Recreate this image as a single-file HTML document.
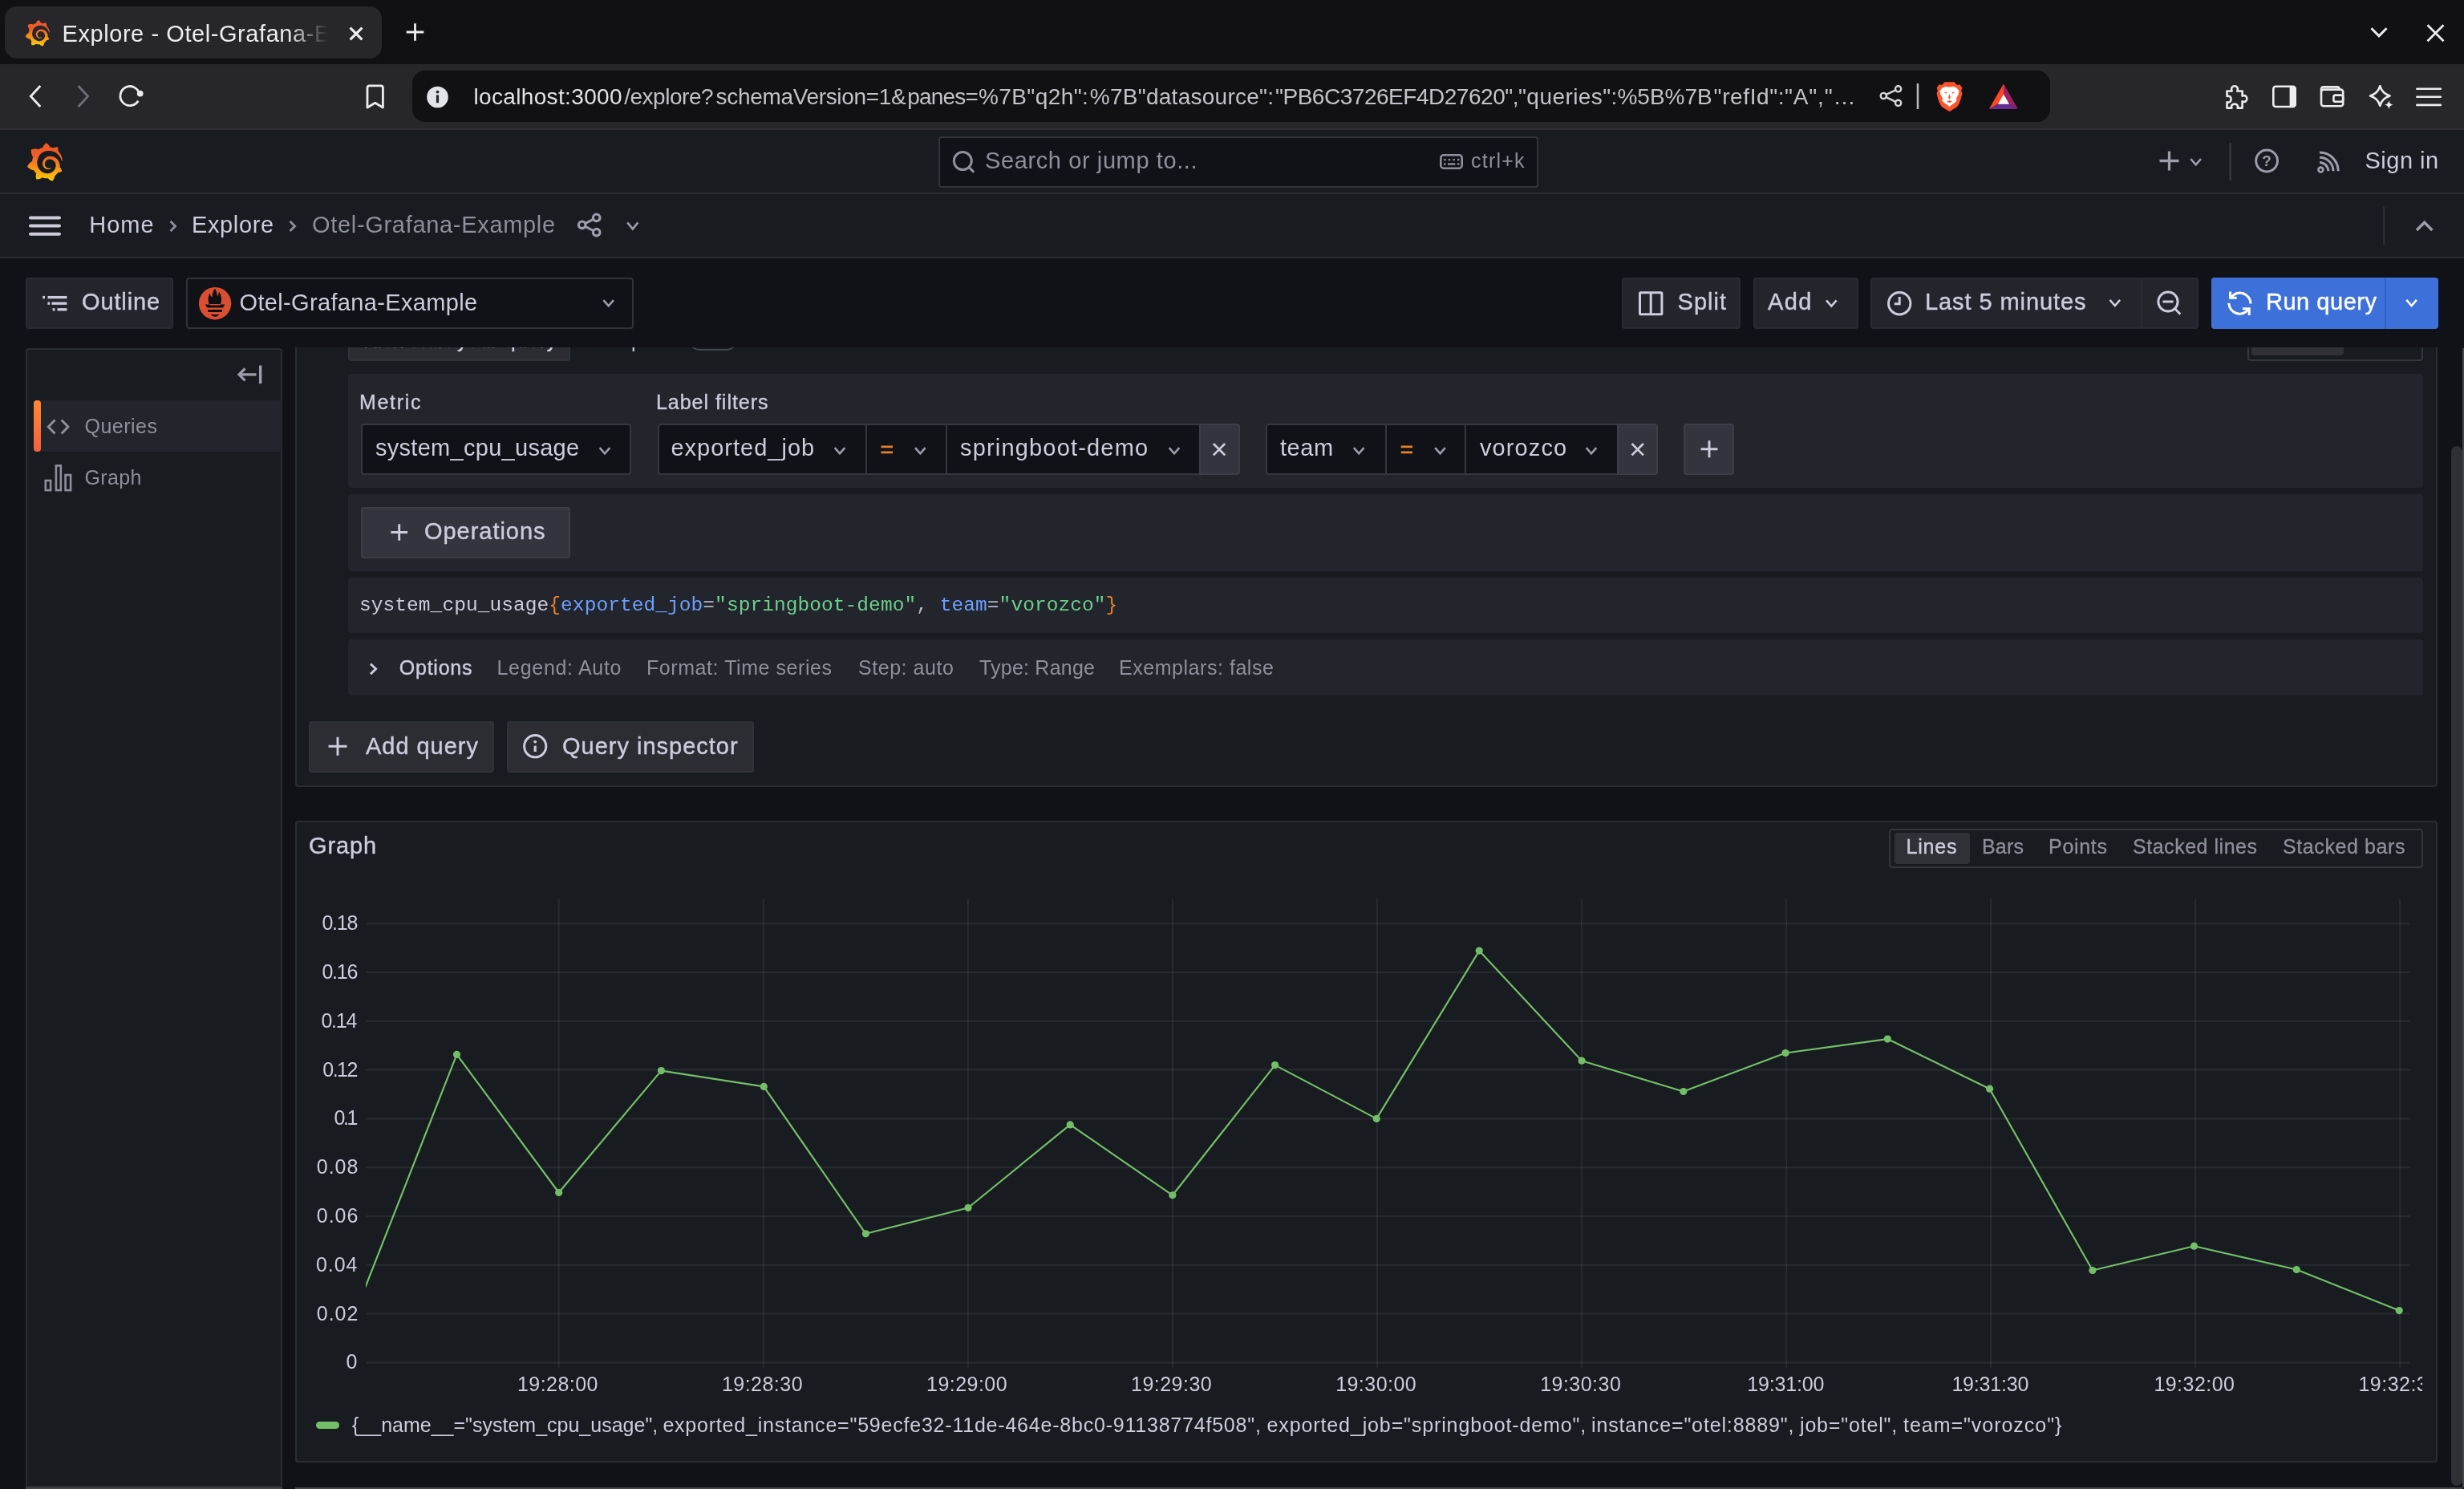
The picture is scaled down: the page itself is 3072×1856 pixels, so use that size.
<!DOCTYPE html>
<html lang="en"><head><meta charset="utf-8"><title>Explore - Otel-Grafana-Example - Grafana</title><style>
html,body{margin:0;padding:0;}
body{width:3072px;height:1856px;overflow:hidden;background:#111217;position:relative;font-family:"Liberation Sans", sans-serif;}
#root{position:absolute;left:0;top:0;width:3072px;height:1856px;overflow:hidden;will-change:transform;}
.a{position:absolute;box-sizing:border-box;}
.t{white-space:pre;line-height:1;font-family:"Liberation Sans", sans-serif;}
.m{font-family:"Liberation Mono", monospace;}
svg{overflow:visible;}
</style></head>
<body>
<div id="root">
<div class="a" style="left:32px;top:434px;width:320px;height:1420px;background:#181b1f;border:2px solid #2a2c32;border-radius:4px 4px 0 0;"></div>
<div class="a" style="left:42px;top:499px;width:309px;height:64px;background:#22252b;border-radius:4px 0 0 4px;"></div>
<div class="a" style="left:42px;top:499px;width:9px;height:64px;background:linear-gradient(180deg,#ff8833 0%,#f55f3e 100%);border-radius:4px;"></div>
<span class="a t" style="left:105.50px;top:518.64px;font-size:25px;color:#8e8f9b;letter-spacing:0.494px;">Queries</span>
<span class="a t" style="left:105.50px;top:583.14px;font-size:25px;color:#8e8f9b;letter-spacing:0.355px;">Graph</span>
<div class="a" style="left:368px;top:380px;width:2671px;height:601px;background:#181b1f;border:2px solid #2a2c32;border-radius:4px;"></div>
<div class="a" style="left:434px;top:401px;width:277px;height:49px;background:#2b2d33;border:2px solid #303239;border-radius:4px;"></div>
<span class="a t" style="left:453.00px;top:411.84px;font-size:25px;color:rgb(204,204,220);letter-spacing:0.657px;-webkit-text-stroke:0.3px rgb(204,204,220);">Kick start your query</span>
<span class="a t" style="left:755.50px;top:411.84px;font-size:25px;color:rgb(204,204,220);letter-spacing:1.152px;">Explain</span>
<div class="a" style="left:857px;top:405px;width:64px;height:32px;background:transparent;border:2px solid #44464e;border-radius:16px;"></div>
<div class="a" style="left:2802px;top:386px;width:219px;height:64px;background:transparent;border:2px solid #34363d;border-radius:4px;"></div>
<div class="a" style="left:2807px;top:392px;width:115px;height:51px;background:#2f3137;border-radius:4px;"></div>
<span class="a t" style="left:2824.00px;top:411.34px;font-size:25px;color:rgb(204,204,220);letter-spacing:0.251px;-webkit-text-stroke:0.3px rgb(204,204,220);">Builder</span>
<span class="a t" style="left:2944.00px;top:411.34px;font-size:25px;color:#8e8f9b;letter-spacing:-0.954px;">Code</span>
<div class="a" style="left:434px;top:466px;width:2587px;height:142px;background:#22252b;border-radius:4px;"></div>
<span class="a t" style="left:448.00px;top:489.14px;font-size:25px;color:rgb(204,204,220);letter-spacing:1.689px;-webkit-text-stroke:0.35px rgb(204,204,220);">Metric</span>
<span class="a t" style="left:818.00px;top:489.14px;font-size:25px;color:rgb(204,204,220);letter-spacing:0.971px;-webkit-text-stroke:0.35px rgb(204,204,220);">Label filters</span>
<div class="a" style="left:450px;top:528px;width:337px;height:64px;background:#111217;border:2px solid #35373f;border-radius:4px;"></div>
<span class="a t" style="left:468.00px;top:543.75px;font-size:29px;color:rgb(204,204,220);letter-spacing:0.284px;">system_cpu_usage</span>
<div class="a" style="left:820px;top:528px;width:261px;height:64px;background:#111217;border:2px solid #35373f;border-radius:4px 0 0 4px;"></div>
<div class="a" style="left:1079px;top:528px;width:102px;height:64px;background:#111217;border:2px solid #35373f;"></div>
<div class="a" style="left:1179px;top:528px;width:318px;height:64px;background:#111217;border:2px solid #35373f;"></div>
<div class="a" style="left:1495px;top:528px;width:51px;height:64px;background:#32353e;border:2px solid #3b3e47;border-radius:0 4px 4px 0;"></div>
<span class="a t" style="left:836.50px;top:543.75px;font-size:29px;color:rgb(204,204,220);letter-spacing:0.995px;">exported_job</span>
<span class="a t" style="left:1197.00px;top:543.75px;font-size:29px;color:rgb(204,204,220);letter-spacing:1.179px;">springboot-demo</span>
<div class="a" style="left:1578px;top:528px;width:151px;height:64px;background:#111217;border:2px solid #35373f;border-radius:4px 0 0 4px;"></div>
<div class="a" style="left:1727px;top:528px;width:101px;height:64px;background:#111217;border:2px solid #35373f;"></div>
<div class="a" style="left:1826px;top:528px;width:192px;height:64px;background:#111217;border:2px solid #35373f;"></div>
<div class="a" style="left:2016px;top:528px;width:51px;height:64px;background:#32353e;border:2px solid #3b3e47;border-radius:0 4px 4px 0;"></div>
<span class="a t" style="left:1596.00px;top:543.75px;font-size:29px;color:rgb(204,204,220);letter-spacing:0.562px;">team</span>
<span class="a t" style="left:1845.00px;top:543.75px;font-size:29px;color:rgb(204,204,220);letter-spacing:1.098px;">vorozco</span>
<div class="a" style="left:2099px;top:528px;width:63px;height:64px;background:#32353e;border:2px solid #3b3e47;border-radius:4px;"></div>
<div class="a" style="left:434px;top:616px;width:2587px;height:96px;background:#22252b;border-radius:4px;"></div>
<div class="a" style="left:450px;top:632px;width:261px;height:64px;background:#32353e;border:2px solid #3b3e47;border-radius:4px;"></div>
<span class="a t" style="left:529.00px;top:647.75px;font-size:29px;color:rgb(204,204,220);letter-spacing:0.960px;-webkit-text-stroke:0.4px rgb(204,204,220);">Operations</span>
<div class="a" style="left:434px;top:720px;width:2587px;height:69px;background:#22252b;border-radius:4px;"></div>
<span class="a t m" style="left:448.00px;top:742.70px;font-size:24.5px;color:rgb(204,204,220);letter-spacing:0.067px;"><span style="color:#ccccdc">system_cpu_usage</span><span style="color:#e5812a">{</span><span style="color:#6e9fff">exported_job</span><span style="color:#b4b6c4">=</span><span style="color:#6ccf8e">"springboot-demo"</span><span style="color:#b4b6c4">, </span><span style="color:#6e9fff">team</span><span style="color:#b4b6c4">=</span><span style="color:#6ccf8e">"vorozco"</span><span style="color:#e5812a">}</span></span>
<div class="a" style="left:434px;top:797px;width:2587px;height:70px;background:#22252b;border-radius:4px;"></div>
<span class="a t" style="left:497.80px;top:819.64px;font-size:25px;color:rgb(204,204,220);letter-spacing:0.757px;-webkit-text-stroke:0.4px rgb(204,204,220);">Options</span>
<span class="a t" style="left:619.50px;top:819.64px;font-size:25px;color:#8e8f9b;letter-spacing:0.696px;">Legend: Auto</span>
<span class="a t" style="left:806.00px;top:819.64px;font-size:25px;color:#8e8f9b;letter-spacing:0.565px;">Format: Time series</span>
<span class="a t" style="left:1070.00px;top:819.64px;font-size:25px;color:#8e8f9b;letter-spacing:0.547px;">Step: auto</span>
<span class="a t" style="left:1221.00px;top:819.64px;font-size:25px;color:#8e8f9b;letter-spacing:0.214px;">Type: Range</span>
<span class="a t" style="left:1395.00px;top:819.64px;font-size:25px;color:#8e8f9b;letter-spacing:0.541px;">Exemplars: false</span>
<div class="a" style="left:385px;top:899px;width:231px;height:64px;background:#2b2d33;border:2px solid #303239;border-radius:4px;"></div>
<span class="a t" style="left:456.00px;top:915.55px;font-size:29px;color:rgb(204,204,220);letter-spacing:0.963px;-webkit-text-stroke:0.4px rgb(204,204,220);">Add query</span>
<div class="a" style="left:632px;top:899px;width:308px;height:64px;background:#2b2d33;border:2px solid #303239;border-radius:4px;"></div>
<span class="a t" style="left:701.00px;top:915.55px;font-size:29px;color:rgb(204,204,220);letter-spacing:0.997px;-webkit-text-stroke:0.4px rgb(204,204,220);">Query inspector</span>
<div class="a" style="left:32px;top:1854.2px;width:320px;height:1.8px;background:#454547;"></div>
<div class="a" style="left:368px;top:1854.2px;width:2702px;height:1.8px;background:#454547;"></div>
<div class="a" style="left:3070px;top:433.5px;width:2px;height:1420.7px;background:#474748;"></div>
<div class="a" style="left:3056px;top:556px;width:13.7px;height:1296px;background:#2f3036;border-radius:7px;"></div>
<div class="a" style="left:368px;top:1023px;width:2671px;height:800px;background:#181b1f;border:2px solid #2a2c32;border-radius:4px;"></div>
<span class="a t" style="left:385.00px;top:1040.25px;font-size:29px;color:rgb(204,204,220);letter-spacing:0.882px;-webkit-text-stroke:0.4px rgb(204,204,220);">Graph</span>
<div class="a" style="left:2355px;top:1033px;width:666px;height:49px;background:transparent;border:2px solid #34363d;border-radius:4px;"></div>
<div class="a" style="left:2362px;top:1038px;width:94px;height:39px;background:#2f3137;border-radius:4px;"></div>
<span class="a t" style="left:2376.50px;top:1043.14px;font-size:25px;color:rgb(204,204,220);letter-spacing:0.809px;-webkit-text-stroke:0.4px rgb(204,204,220);">Lines</span>
<span class="a t" style="left:2471.00px;top:1043.14px;font-size:25px;color:#8e8f9b;letter-spacing:0.199px;-webkit-text-stroke:0.3px #8e8f9b;">Bars</span>
<span class="a t" style="left:2554.00px;top:1043.14px;font-size:25px;color:#8e8f9b;letter-spacing:0.704px;-webkit-text-stroke:0.3px #8e8f9b;">Points</span>
<span class="a t" style="left:2659.00px;top:1043.14px;font-size:25px;color:#8e8f9b;letter-spacing:0.526px;-webkit-text-stroke:0.3px #8e8f9b;">Stacked lines</span>
<span class="a t" style="left:2846.00px;top:1043.14px;font-size:25px;color:#8e8f9b;letter-spacing:0.599px;-webkit-text-stroke:0.3px #8e8f9b;">Stacked bars</span>
<svg class="a" style="left:0;top:0" width="3072" height="1856" viewBox="0 0 3072 1856"><path d="M456.5,1698.4 H3004.5" stroke="rgba(204,204,220,0.085)" stroke-width="2"/><path d="M456.5,1637.6 H3004.5" stroke="rgba(204,204,220,0.085)" stroke-width="2"/><path d="M456.5,1576.8 H3004.5" stroke="rgba(204,204,220,0.085)" stroke-width="2"/><path d="M456.5,1516.0 H3004.5" stroke="rgba(204,204,220,0.085)" stroke-width="2"/><path d="M456.5,1455.2 H3004.5" stroke="rgba(204,204,220,0.085)" stroke-width="2"/><path d="M456.5,1394.4 H3004.5" stroke="rgba(204,204,220,0.085)" stroke-width="2"/><path d="M456.5,1333.6 H3004.5" stroke="rgba(204,204,220,0.085)" stroke-width="2"/><path d="M456.5,1272.8 H3004.5" stroke="rgba(204,204,220,0.085)" stroke-width="2"/><path d="M456.5,1212.0 H3004.5" stroke="rgba(204,204,220,0.085)" stroke-width="2"/><path d="M456.5,1151.2 H3004.5" stroke="rgba(204,204,220,0.085)" stroke-width="2"/><path d="M696.7,1120.5 V1705" stroke="rgba(204,204,220,0.085)" stroke-width="2"/><path d="M951.8,1120.5 V1705" stroke="rgba(204,204,220,0.085)" stroke-width="2"/><path d="M1206.8,1120.5 V1705" stroke="rgba(204,204,220,0.085)" stroke-width="2"/><path d="M1461.9,1120.5 V1705" stroke="rgba(204,204,220,0.085)" stroke-width="2"/><path d="M1716.9,1120.5 V1705" stroke="rgba(204,204,220,0.085)" stroke-width="2"/><path d="M1972.0,1120.5 V1705" stroke="rgba(204,204,220,0.085)" stroke-width="2"/><path d="M2227.1,1120.5 V1705" stroke="rgba(204,204,220,0.085)" stroke-width="2"/><path d="M2482.1,1120.5 V1705" stroke="rgba(204,204,220,0.085)" stroke-width="2"/><path d="M2737.2,1120.5 V1705" stroke="rgba(204,204,220,0.085)" stroke-width="2"/><path d="M2992.2,1120.5 V1705" stroke="rgba(204,204,220,0.085)" stroke-width="2"/><defs><clipPath id="plotclip"><rect x="456" y="1118" width="2552" height="584"/></clipPath></defs><path d="M441.4,1640 L569.5,1314.4 L696.7,1486.5 L824.4,1334.6 L952.3,1354.4 L1079.4,1537.8 L1207.0,1505.5 L1334.2,1401.9 L1461.9,1489.8 L1589.6,1327.6 L1716.2,1394.4 L1844.2,1185.1 L1972.1,1322.2 L2098.8,1360.5 L2226.1,1312.5 L2353.3,1295.1 L2480.6,1357.2 L2608.9,1583.5 L2735.5,1553.2 L2863.2,1582.5 L2991.2,1633.6" fill="none" stroke="#73bf69" stroke-width="2.2" stroke-linejoin="round" clip-path="url(#plotclip)"/><circle cx="569.5" cy="1314.4" r="4.6" fill="#73bf69"/><circle cx="696.7" cy="1486.5" r="4.6" fill="#73bf69"/><circle cx="824.4" cy="1334.6" r="4.6" fill="#73bf69"/><circle cx="952.3" cy="1354.4" r="4.6" fill="#73bf69"/><circle cx="1079.4" cy="1537.8" r="4.6" fill="#73bf69"/><circle cx="1207.0" cy="1505.5" r="4.6" fill="#73bf69"/><circle cx="1334.2" cy="1401.9" r="4.6" fill="#73bf69"/><circle cx="1461.9" cy="1489.8" r="4.6" fill="#73bf69"/><circle cx="1589.6" cy="1327.6" r="4.6" fill="#73bf69"/><circle cx="1716.2" cy="1394.4" r="4.6" fill="#73bf69"/><circle cx="1844.2" cy="1185.1" r="4.6" fill="#73bf69"/><circle cx="1972.1" cy="1322.2" r="4.6" fill="#73bf69"/><circle cx="2098.8" cy="1360.5" r="4.6" fill="#73bf69"/><circle cx="2226.1" cy="1312.5" r="4.6" fill="#73bf69"/><circle cx="2353.3" cy="1295.1" r="4.6" fill="#73bf69"/><circle cx="2480.6" cy="1357.2" r="4.6" fill="#73bf69"/><circle cx="2608.9" cy="1583.5" r="4.6" fill="#73bf69"/><circle cx="2735.5" cy="1553.2" r="4.6" fill="#73bf69"/><circle cx="2863.2" cy="1582.5" r="4.6" fill="#73bf69"/><circle cx="2991.2" cy="1633.6" r="4.6" fill="#73bf69"/></svg>
<span class="a t" style="left:431.50px;top:1685.34px;font-size:25px;color:rgb(204,204,220);">0</span>
<span class="a t" style="left:394.80px;top:1624.54px;font-size:25px;color:rgb(204,204,220);letter-spacing:0.982px;">0.02</span>
<span class="a t" style="left:393.90px;top:1563.74px;font-size:25px;color:rgb(204,204,220);letter-spacing:0.949px;">0.04</span>
<span class="a t" style="left:394.80px;top:1502.94px;font-size:25px;color:rgb(204,204,220);letter-spacing:0.982px;">0.06</span>
<span class="a t" style="left:394.80px;top:1442.14px;font-size:25px;color:rgb(204,204,220);letter-spacing:0.982px;">0.08</span>
<span class="a t" style="left:416.40px;top:1381.34px;font-size:25px;color:rgb(204,204,220);letter-spacing:-2.375px;">0.1</span>
<span class="a t" style="left:402.30px;top:1320.54px;font-size:25px;color:rgb(204,204,220);letter-spacing:-1.518px;">0.12</span>
<span class="a t" style="left:400.40px;top:1259.74px;font-size:25px;color:rgb(204,204,220);letter-spacing:-1.218px;">0.14</span>
<span class="a t" style="left:401.40px;top:1198.94px;font-size:25px;color:rgb(204,204,220);letter-spacing:-1.218px;">0.16</span>
<span class="a t" style="left:401.40px;top:1138.14px;font-size:25px;color:rgb(204,204,220);letter-spacing:-1.218px;">0.18</span>
<span class="a t" style="left:644.90px;top:1713.04px;font-size:25px;color:rgb(204,204,220);letter-spacing:0.470px;">19:28:00</span>
<span class="a t" style="left:899.96px;top:1713.04px;font-size:25px;color:rgb(204,204,220);letter-spacing:0.470px;">19:28:30</span>
<span class="a t" style="left:1155.02px;top:1713.04px;font-size:25px;color:rgb(204,204,220);letter-spacing:0.470px;">19:29:00</span>
<span class="a t" style="left:1410.08px;top:1713.04px;font-size:25px;color:rgb(204,204,220);letter-spacing:0.470px;">19:29:30</span>
<span class="a t" style="left:1665.14px;top:1713.04px;font-size:25px;color:rgb(204,204,220);letter-spacing:0.470px;">19:30:00</span>
<span class="a t" style="left:1920.20px;top:1713.04px;font-size:25px;color:rgb(204,204,220);letter-spacing:0.470px;">19:30:30</span>
<span class="a t" style="left:2178.36px;top:1713.04px;font-size:25px;color:rgb(204,204,220);letter-spacing:-0.187px;">19:31:00</span>
<span class="a t" style="left:2433.42px;top:1713.04px;font-size:25px;color:rgb(204,204,220);letter-spacing:-0.187px;">19:31:30</span>
<span class="a t" style="left:2685.38px;top:1713.04px;font-size:25px;color:rgb(204,204,220);letter-spacing:0.470px;">19:32:00</span>
<div class="a" style="left:2938px;top:1700px;width:81px;height:50px;background:transparent;overflow:hidden;"></div>
<span class="a t" style="left:2940.50px;top:1713.04px;font-size:25px;color:rgb(204,204,220);letter-spacing:0.470px;clip-path:inset(-10px 21.5px -10px -5px);">19:32:30</span>
<div class="a" style="left:393.5px;top:1772px;width:29px;height:9px;background:#73bf69;border-radius:4.5px;"></div>
<span class="a t" style="left:439.00px;top:1763.84px;font-size:25px;color:rgb(204,204,220);">{__name__="system_cpu_usage",</span>
<span class="a t" style="left:826.40px;top:1763.84px;font-size:25px;color:rgb(204,204,220);letter-spacing:0.787px;">exported_instance="59ecfe32-11de-464e-8bc0-91138774f508",</span>
<span class="a t" style="left:1579.60px;top:1763.84px;font-size:25px;color:rgb(204,204,220);letter-spacing:0.873px;">exported_job="springboot-demo",</span>
<span class="a t" style="left:1984.00px;top:1763.84px;font-size:25px;color:rgb(204,204,220);letter-spacing:0.853px;">instance="otel:8889",</span>
<span class="a t" style="left:2244.00px;top:1763.84px;font-size:25px;color:rgb(204,204,220);letter-spacing:0.828px;">job="otel",</span>
<span class="a t" style="left:2373.00px;top:1763.84px;font-size:25px;color:rgb(204,204,220);letter-spacing:0.967px;">team="vorozco"}</span>
<svg class="a" style="left:0;top:0" width="3072" height="1856" viewBox="0 0 3072 1856"><path d="M298,466.8 H319.5 M305.5,459.3 L298,466.8 L305.5,474.3" fill="none" stroke="#9b9dab" stroke-width="3.2" stroke-linecap="butt" stroke-linejoin="miter" /><path d="M324.7,455.5 V478.2" fill="none" stroke="#9b9dab" stroke-width="3.4" stroke-linecap="butt" stroke-linejoin="round" /><path d="M68.5,523.5 L60.3,532 L68.5,540.5 M76.7,523.5 L84.9,532 L76.7,540.5" fill="none" stroke="#8e8f9b" stroke-width="3" stroke-linecap="butt" stroke-linejoin="miter" /><rect x="56.8" y="599" width="6.3" height="12.1" rx="0" fill="none" stroke="#8e8f9b" stroke-width="2.6"/><rect x="69.9" y="580.4" width="5.9" height="30.7" rx="0" fill="none" stroke="#8e8f9b" stroke-width="2.6"/><rect x="81.6" y="592" width="6.5" height="19.1" rx="0" fill="none" stroke="#8e8f9b" stroke-width="2.6"/><path d="M747.7,558.1 L754,565.3000000000001 L760.3,558.1" fill="none" stroke="#9b9dab" stroke-width="2.6" stroke-linecap="butt" stroke-linejoin="miter" /><path d="M1040.7,558.1 L1047,565.3000000000001 L1053.3,558.1" fill="none" stroke="#9b9dab" stroke-width="2.6" stroke-linecap="butt" stroke-linejoin="miter" /><path d="M1098.5,556.8 H1113 M1098.5,563.8 H1113" fill="none" stroke="#e5812a" stroke-width="2.7" stroke-linecap="butt" stroke-linejoin="round" /><path d="M1141.0,558.1 L1147.3,565.3000000000001 L1153.6,558.1" fill="none" stroke="#9b9dab" stroke-width="2.6" stroke-linecap="butt" stroke-linejoin="miter" /><path d="M1457.7,558.1 L1464,565.3000000000001 L1470.3,558.1" fill="none" stroke="#9b9dab" stroke-width="2.6" stroke-linecap="butt" stroke-linejoin="miter" /><path d="M1512.8,553.0 L1527.2,567.4000000000001 M1527.2,553.0 L1512.8,567.4000000000001" fill="none" stroke="rgb(204,204,220)" stroke-width="2.7" stroke-linecap="butt" stroke-linejoin="round" /><path d="M1687.9,558.1 L1694.2,565.3000000000001 L1700.5,558.1" fill="none" stroke="#9b9dab" stroke-width="2.6" stroke-linecap="butt" stroke-linejoin="miter" /><path d="M1746.7,556.8 H1761 M1746.7,563.8 H1761" fill="none" stroke="#e5812a" stroke-width="2.7" stroke-linecap="butt" stroke-linejoin="round" /><path d="M1789.2,558.1 L1795.5,565.3000000000001 L1801.8,558.1" fill="none" stroke="#9b9dab" stroke-width="2.6" stroke-linecap="butt" stroke-linejoin="miter" /><path d="M1977.7,558.1 L1984,565.3000000000001 L1990.3,558.1" fill="none" stroke="#9b9dab" stroke-width="2.6" stroke-linecap="butt" stroke-linejoin="miter" /><path d="M2034.5,553.0 L2048.9,567.4000000000001 M2048.9,553.0 L2034.5,567.4000000000001" fill="none" stroke="rgb(204,204,220)" stroke-width="2.7" stroke-linecap="butt" stroke-linejoin="round" /><path d="M2120.5,559.8 H2141.5 M2131,549.3 V570.3" fill="none" stroke="rgb(204,204,220)" stroke-width="2.9" stroke-linecap="butt" stroke-linejoin="round" /><path d="M487.4,663.5 H508.0 M497.7,653.2 V673.8" fill="none" stroke="rgb(204,204,220)" stroke-width="2.9" stroke-linecap="butt" stroke-linejoin="round" /><path d="M462,827.5 L468.6,833.8 L462,840.1" fill="none" stroke="rgb(204,204,220)" stroke-width="2.9" stroke-linecap="butt" stroke-linejoin="miter" /><path d="M409.5,930.3 H432.5 M421,918.8 V941.8" fill="none" stroke="rgb(204,204,220)" stroke-width="2.9" stroke-linecap="butt" stroke-linejoin="round" /><circle cx="667.2" cy="930.2" r="13.6" fill="none" stroke="rgb(204,204,220)" stroke-width="3"/><circle cx="667.2" cy="924.6" r="1.9" fill="rgb(204,204,220)" stroke="none" stroke-width="0"/><path d="M667.2,929.6 V937" fill="none" stroke="rgb(204,204,220)" stroke-width="3.2" stroke-linecap="butt" stroke-linejoin="round" /></svg>
<div class="a" style="left:0px;top:322px;width:3072px;height:111px;background:#111217;"></div>
<div class="a" style="left:32px;top:346px;width:184px;height:64px;background:#24252c;border:2px solid #2a2b32;border-radius:4px;"></div>
<span class="a t" style="left:102.00px;top:362.25px;font-size:29px;color:rgb(204,204,220);letter-spacing:0.874px;-webkit-text-stroke:0.4px rgb(204,204,220);">Outline</span>
<div class="a" style="left:232px;top:346px;width:558px;height:64px;background:#111217;border:2px solid #303239;border-radius:4px;"></div>
<span class="a t" style="left:298.50px;top:362.75px;font-size:29px;color:rgb(204,204,220);letter-spacing:0.343px;">Otel-Grafana-Example</span>
<div class="a" style="left:2022px;top:346px;width:148px;height:64px;background:#24252c;border:2px solid #2a2b32;border-radius:4px;"></div>
<span class="a t" style="left:2091.50px;top:362.25px;font-size:29px;color:rgb(204,204,220);letter-spacing:1.036px;-webkit-text-stroke:0.4px rgb(204,204,220);">Split</span>
<div class="a" style="left:2186px;top:346px;width:131px;height:64px;background:#24252c;border:2px solid #2a2b32;border-radius:4px;"></div>
<span class="a t" style="left:2204.00px;top:362.25px;font-size:29px;color:rgb(204,204,220);letter-spacing:1.414px;-webkit-text-stroke:0.4px rgb(204,204,220);">Add</span>
<div class="a" style="left:2332px;top:346px;width:339px;height:64px;background:#24252c;border:2px solid #2a2b32;border-radius:4px 0 0 4px;"></div>
<div class="a" style="left:2669px;top:346px;width:72px;height:64px;background:#24252c;border:2px solid #2a2b32;border-radius:0 4px 4px 0;"></div>
<span class="a t" style="left:2400.00px;top:362.25px;font-size:29px;color:rgb(204,204,220);letter-spacing:0.915px;-webkit-text-stroke:0.4px rgb(204,204,220);">Last 5 minutes</span>
<div class="a" style="left:2757px;top:346px;width:216px;height:64px;background:#3d71d9;border-radius:4px 0 0 4px;"></div>
<div class="a" style="left:2974px;top:346px;width:66px;height:64px;background:#3d71d9;border-radius:0 4px 4px 0;"></div>
<div class="a" style="left:2972.5px;top:346px;width:2px;height:64px;background:#3461bd;"></div>
<span class="a t" style="left:2825.00px;top:362.25px;font-size:29px;color:#ffffff;letter-spacing:0.525px;-webkit-text-stroke:0.4px #ffffff;">Run query</span>
<svg class="a" style="left:0;top:0" width="3072" height="1856" viewBox="0 0 3072 1856"><path d="M59.5,370.6 H83.4" fill="none" stroke="rgb(204,204,220)" stroke-width="3.3" stroke-linecap="butt" stroke-linejoin="round" /><path d="M53.2,370.6 H56.0" fill="none" stroke="rgb(204,204,220)" stroke-width="3.3" stroke-linecap="butt" stroke-linejoin="round" /><path d="M64.5,378.2 H83.4" fill="none" stroke="rgb(204,204,220)" stroke-width="3.3" stroke-linecap="butt" stroke-linejoin="round" /><path d="M59.4,378.2 H62.199999999999996" fill="none" stroke="rgb(204,204,220)" stroke-width="3.3" stroke-linecap="butt" stroke-linejoin="round" /><path d="M71.5,385.8 H83.4" fill="none" stroke="rgb(204,204,220)" stroke-width="3.3" stroke-linecap="butt" stroke-linejoin="round" /><path d="M65.6,385.8 H68.4" fill="none" stroke="rgb(204,204,220)" stroke-width="3.3" stroke-linecap="butt" stroke-linejoin="round" /><circle cx="268.1" cy="378.2" r="20.2" fill="#da4e31" stroke="none" stroke-width="0"/><path d="M268,359.8 C270.8,364 270.2,367.3 271.3,369.2 C272.4,368 272.6,365.4 272.9,363.4 C276.6,369 277,374.5 275,379 L260.8,379 C258.8,374.8 259.4,369.5 261.5,365.4 C262.2,368.3 263.2,369.8 264.7,370.4 C264.4,365.8 265.9,362.2 268,359.8 Z" fill="#0f1015" stroke="#0f1015" stroke-width="0" stroke-linecap="round" stroke-linejoin="round" /><path d="M255.8,379.6 L261.5,379.6 L262.5,380.6 L273.8,380.6 L274.8,379.6 L280.4,379.6 L278,383.5 L258.2,383.5 Z" fill="#0f1015" stroke="#0f1015" stroke-width="0" stroke-linecap="round" stroke-linejoin="round" /><rect x="259.3" y="386" width="17.6" height="3" rx="0" fill="#0f1015" stroke="none" stroke-width="0"/><path d="M263,392.1 H273.2 C272.2,394 270.5,394.8 268.1,394.8 C265.7,394.8 264,394 263,392.1 Z" fill="#0f1015" stroke="#0f1015" stroke-width="0" stroke-linecap="round" stroke-linejoin="round" /><path d="M752.4000000000001,374.09999999999997 L758.7,381.3 L765.0,374.09999999999997" fill="none" stroke="#9b9dab" stroke-width="2.6" stroke-linecap="butt" stroke-linejoin="miter" /><rect x="2044.5" y="364.8" width="27.4" height="27" rx="1" fill="none" stroke="rgb(204,204,220)" stroke-width="3"/><path d="M2058.2,364.8 V391.8" fill="none" stroke="rgb(204,204,220)" stroke-width="3" stroke-linecap="butt" stroke-linejoin="round" /><path d="M2277.0,374.4 L2283.3,381.6 L2289.6000000000004,374.4" fill="none" stroke="rgb(204,204,220)" stroke-width="2.6" stroke-linecap="butt" stroke-linejoin="miter" /><circle cx="2368.2" cy="378.2" r="13.7" fill="none" stroke="rgb(204,204,220)" stroke-width="3"/><path d="M2368.2,370 V378.7 H2361.8" fill="none" stroke="rgb(204,204,220)" stroke-width="3" stroke-linecap="butt" stroke-linejoin="miter" /><path d="M2630.5,373.79999999999995 L2636.8,381.0 L2643.1000000000004,373.79999999999995" fill="none" stroke="rgb(204,204,220)" stroke-width="2.6" stroke-linecap="butt" stroke-linejoin="miter" /><circle cx="2703" cy="376" r="12.1" fill="none" stroke="rgb(204,204,220)" stroke-width="3"/><path d="M2711.8,385 L2718.3,391.6 M2696.5,376 H2709.6" fill="none" stroke="rgb(204,204,220)" stroke-width="3" stroke-linecap="butt" stroke-linejoin="round" /><path d="M2806,378.6 A13.5,13.5 0 0 0 2781.6,370.6" fill="none" stroke="#fff" stroke-width="3" stroke-linecap="butt" stroke-linejoin="round" /><path d="M2780.6,363.6 V371.3 H2788.6" fill="none" stroke="#fff" stroke-width="3" stroke-linecap="butt" stroke-linejoin="miter" /><path d="M2778.8,377.8 A13.5,13.5 0 0 0 2803.2,385.6" fill="none" stroke="#fff" stroke-width="3" stroke-linecap="butt" stroke-linejoin="round" /><path d="M2796,384.7 H2804.2 V393" fill="none" stroke="#fff" stroke-width="3" stroke-linecap="butt" stroke-linejoin="miter" /><path d="M3000.2999999999997,373.9 L3006.6,381.1 L3012.9,373.9" fill="none" stroke="#fff" stroke-width="2.6" stroke-linecap="butt" stroke-linejoin="miter" /></svg>
<div class="a" style="left:0px;top:161px;width:3072px;height:80px;background:#181b1f;"></div>
<div class="a" style="left:0px;top:240px;width:3072px;height:2px;background:#2a2c32;"></div>
<div class="a" style="left:0px;top:242px;width:3072px;height:79px;background:#181b1f;"></div>
<div class="a" style="left:0px;top:320px;width:3072px;height:2px;background:#2a2c32;"></div>
<svg class="a" style="left:33.4px;top:177.5px;" width="45.8" height="47.63" viewBox="0 0 351 365"><defs><linearGradient id="lg1" gradientUnits="userSpaceOnUse" x1="175.5" y1="445" x2="175.5" y2="114"><stop offset="0" stop-color="#FFF100"/><stop offset="1" stop-color="#F05A28"/></linearGradient></defs><path fill="url(#lg1)" d="M342,161.2c-0.6-6.1-1.6-13.1-3.6-20.9c-2-7.7-5-16.2-9.4-25c-4.4-8.8-10.1-17.9-17.5-26.8c-2.9-3.5-6.1-6.9-9.5-10.2c5.1-20.3-6.2-37.9-6.2-37.9c-19.5-1.2-31.9,6.1-36.5,9.4c-0.8-0.3-1.5-0.7-2.3-1c-3.3-1.3-6.7-2.6-10.3-3.7c-3.5-1.1-7.1-2.1-10.8-3c-3.7-0.9-7.4-1.6-11.2-2.2c-0.7-0.1-1.3-0.2-2-0.3c-8.500-27.200-32.900-38.600-32.900-38.600c-27.300,17.300-32.400,41.500-32.400,41.500s-0.100,0.500-0.300,1.400c-1.500,0.400-3,0.900-4.500,1.300c-2.100,0.600-4.200,1.400-6.200,2.200c-2.100,0.800-4.100,1.600-6.200,2.500c-4.100,1.800-8.200,3.800-12.200,6c-3.900,2.200-7.700,4.600-11.400,7.100c-0.500-0.200-1-0.400-1-0.400c-37.800-14.400-71.300,2.900-71.300,2.900c-3.100,40.200,15.100,65.500,18.700,70.100c-0.900,2.500-1.700,5-2.500,7.500c-2.800,9.100-4.900,18.400-6.200,28.100c-0.200,1.400-0.400,2.800-0.500,4.200C18.800,192.700,8.500,228,8.500,228c29.100,33.500,63.100,35.600,63.100,35.600c0,0,0.100-0.100,0.100-0.100c4.300,7.700,9.300,15,14.900,21.900c2.400,2.900,4.800,5.600,7.400,8.300c-10.600,30.400,1.500,55.600,1.500,55.600c32.400,1.200,53.700-14.200,58.200-17.700c3.200,1.100,6.500,2.100,9.800,2.900c10,2.600,20.200,4.100,30.400,4.500c2.500,0.100,5.100,0.200,7.600,0.100l1.200,0l0.800,0l1.600,0l1.600-0.100l0,0.100c15.300,21.800,42.100,24.900,42.100,24.900c19.100-20.100,20.200-40.100,20.200-44.400l0,0c0,0,0-0.100,0-0.300c0-0.400,0-0.600,0-0.600l0,0c0-0.300,0-0.600,0-0.900c4-2.800,7.800-5.800,11.400-9.100c7.600-6.900,14.300-14.800,19.900-23.300c0.500-0.800,1-1.600,1.500-2.400c21.600,1.200,36.900-13.400,36.900-13.400c-3.600-22.500-16.400-33.500-19.100-35.600l0,0c0,0-0.100-0.100-0.300-0.200c-0.200-0.100-0.200-0.200-0.200-0.200c0,0,0,0,0,0c-0.100-0.100-0.300-0.200-0.500-0.300c0.100-1.400,0.200-2.700,0.300-4.100c0.200-2.400,0.200-4.900,0.200-7.300l0-1.800l0-0.900l0-0.500c0-0.600,0-0.400,0-0.600l-0.100-1.500l-0.100-2c0-0.700-0.100-1.300-0.200-1.900c-0.100-0.600-0.100-1.300-0.200-1.900l-0.200-1.900l-0.300-1.900c-0.400-2.500-0.800-4.900-1.400-7.400c-2.300-9.700-6.100-18.900-11-27.200c-5-8.300-11.200-15.600-18.300-21.800c-7-6.200-14.900-11.200-23.100-14.900c-8.300-3.700-16.900-6.100-25.500-7.200c-4.300-0.600-8.600-0.800-12.900-0.700l-1.600,0l-0.400,0c-0.100,0-0.600,0-0.500,0l-0.700,0l-1.600,0.100c-0.600,0-1.200,0.100-1.700,0.100c-2.200,0.200-4.400,0.500-6.500,0.900c-8.600,1.600-16.700,4.700-23.800,9c-7.100,4.300-13.300,9.600-18.300,15.600c-5,6-8.900,12.700-11.600,19.600c-2.700,6.900-4.200,14.100-4.600,21c-0.100,1.700-0.100,3.500-0.100,5.200c0,0.400,0,0.900,0,1.300l0.100,1.400c0.100,0.800,0.100,1.700,0.200,2.500c0.300,3.500,1,6.900,1.900,10.100c1.900,6.500,4.900,12.400,8.600,17.400c3.700,5,8.200,9.100,12.900,12.400c4.700,3.200,9.800,5.500,14.800,7c5,1.500,10,2.100,14.700,2.100c0.600,0,1.200,0,1.700,0c0.300,0,0.600,0,0.900,0c0.300,0,0.600,0,0.900-0.100c0.500,0,1-0.100,1.500-0.100c0.100,0,0.300,0,0.400-0.100l0.500-0.100c0.300,0,0.600-0.100,0.900-0.100c0.600-0.100,1.100-0.200,1.700-0.300c0.600-0.100,1.100-0.200,1.600-0.400c1.100-0.200,2.100-0.600,3.100-0.900c2-0.700,4-1.500,5.700-2.400c1.800-0.900,3.400-2,5-3c0.400-0.300,0.900-0.600,1.300-1c1.600-1.300,1.900-3.700,0.600-5.300c-1.100-1.400-3.100-1.800-4.700-0.900c-0.400,0.200-0.800,0.400-1.200,0.600c-1.400,0.700-2.800,1.300-4.300,1.800c-1.500,0.500-3.100,0.900-4.700,1.200c-0.800,0.100-1.600,0.200-2.500,0.300c-0.400,0-0.800,0.100-1.300,0.100c-0.400,0-0.900,0-1.200,0c-0.400,0-0.800,0-1.200,0c-0.500,0-1,0-1.500-0.100c0,0-0.300,0-0.100,0l-0.200,0l-0.300,0c-0.200,0-0.500,0-0.700-0.100c-0.500-0.100-0.900-0.100-1.400-0.200c-3.700-0.500-7.400-1.600-10.900-3.200c-3.600-1.600-7-3.800-10.100-6.600c-3.100-2.800-5.800-6.100-7.900-9.900c-2.100-3.800-3.600-8-4.300-12.400c-0.300-2.200-0.500-4.500-0.400-6.700c0-0.600,0.100-1.200,0.100-1.800c0,0.200,0-0.100,0-0.100l0-0.200l0-0.500c0-0.300,0.100-0.600,0.100-0.900c0.100-1.200,0.300-2.400,0.500-3.600c1.700-9.600,6.500-19,13.900-26.100c1.900-1.800,3.900-3.400,6-4.900c2.100-1.500,4.400-2.800,6.800-3.900c2.400-1.100,4.800-2,7.400-2.700c2.500-0.700,5.100-1.100,7.800-1.400c1.300-0.100,2.600-0.200,4-0.200c0.400,0,0.600,0,0.900,0l1.100,0l0.700,0c0.300,0,0,0,0.100,0l0.300,0l1.100,0.100c2.900,0.200,5.700,0.600,8.500,1.300c5.600,1.200,11.100,3.300,16.200,6.100c10.200,5.700,18.900,14.500,24.200,25.100c2.700,5.300,4.600,11,5.500,16.900c0.200,1.500,0.400,3,0.500,4.500l0.100,1.100l0.100,1.100c0,0.400,0,0.800,0,1.100c0,0.400,0,0.800,0,1.100l0,1l0,1.100c0,0.700-0.100,1.900-0.100,2.600c-0.100,1.600-0.300,3.300-0.500,4.900c-0.200,1.600-0.500,3.200-0.800,4.800c-0.300,1.600-0.700,3.200-1.100,4.700c-0.800,3.100-1.800,6.200-3,9.300c-2.400,6-5.600,11.800-9.400,17.100c-7.700,10.600-18.200,19.200-30.200,24.700c-6,2.700-12.300,4.700-18.800,5.700c-3.200,0.600-6.500,0.900-9.800,1l-0.600,0l-0.500,0l-1.100,0l-1.600,0l-0.800,0c0.400,0-0.100,0-0.100,0l-0.300,0c-1.800,0-3.500-0.100-5.300-0.300c-7-0.500-13.900-1.800-20.700-3.700c-6.700-1.900-13.200-4.600-19.400-7.800c-12.300-6.600-23.400-15.600-32-26.500c-4.300-5.400-8.100-11.300-11.200-17.400c-3.100-6.100-5.600-12.600-7.400-19.100c-1.800-6.600-2.900-13.300-3.400-20.100l-0.100-1.300l0-0.300l0-0.300l0-0.600l0-1.100l0-0.300l0-0.400l0-0.800l0-1.600l0-0.300c0,0,0,0.100,0-0.100l0-0.600c0-0.800,0-1.700,0-2.500c0.100-3.300,0.400-6.800,0.800-10.200c0.400-3.400,1-6.900,1.700-10.300c0.700-3.400,1.500-6.800,2.500-10.200c1.900-6.700,4.300-13.200,7.100-19.300c5.700-12.200,13.100-23.100,22-31.800c2.200-2.200,4.500-4.200,6.900-6.200c2.400-1.900,4.900-3.700,7.500-5.400c2.500-1.700,5.200-3.200,7.900-4.600c1.300-0.700,2.700-1.400,4.100-2c0.700-0.300,1.400-0.600,2.100-0.900c0.700-0.300,1.400-0.600,2.100-0.900c2.800-1.200,5.700-2.200,8.700-3.100c0.700-0.200,1.500-0.400,2.200-0.700c0.700-0.200,1.500-0.400,2.200-0.600c1.500-0.400,3-0.800,4.500-1.100c0.700-0.200,1.500-0.300,2.300-0.500c0.800-0.200,1.500-0.300,2.300-0.500c0.800-0.100,1.500-0.300,2.300-0.400l1.100-0.200l1.200-0.200c0.800-0.100,1.500-0.200,2.300-0.300c0.900-0.100,1.700-0.200,2.600-0.300c0.700-0.100,1.900-0.200,2.600-0.300c0.500-0.100,1.100-0.100,1.600-0.200l1.100-0.100l0.500-0.100l0.600,0c0.900-0.100,1.700-0.100,2.600-0.200l1.300-0.100c0,0,0.500,0,0.100,0l0.300,0l0.600,0c0.700,0,1.500-0.100,2.200-0.100c2.900-0.100,5.900-0.100,8.800,0c5.800,0.200,11.500,0.900,17,1.900c11.100,2.100,21.500,5.600,31,10.300c9.500,4.600,17.900,10.300,25.300,16.500c0.500,0.400,0.900,0.800,1.400,1.200c0.400,0.400,0.900,0.800,1.300,1.200c0.900,0.800,1.700,1.600,2.600,2.400c0.900,0.800,1.700,1.600,2.500,2.400c0.800,0.800,1.600,1.600,2.400,2.500c3.100,3.300,6,6.600,8.600,10c5.200,6.700,9.400,13.500,12.700,19.900c0.200,0.400,0.400,0.800,0.600,1.200c0.200,0.400,0.400,0.800,0.600,1.200c0.400,0.800,0.800,1.600,1.100,2.400c0.400,0.800,0.700,1.500,1.100,2.300c0.300,0.800,0.700,1.500,1,2.300c1.200,3,2.400,5.900,3.300,8.600c1.500,4.400,2.600,8.300,3.500,11.700c0.300,1.400,1.600,2.300,3,2.100c1.500-0.100,2.600-1.300,2.600-2.800C342.600,170.400,342.500,166.100,342,161.200z"/></svg>
<div class="a" style="left:1170px;top:170px;width:748px;height:64px;background:#111217;border:2px solid #31333a;border-radius:4px;"></div>
<span class="a t" style="left:1228.00px;top:186.25px;font-size:29px;color:#8e8f9b;letter-spacing:0.605px;">Search or jump to...</span>
<span class="a t" style="left:1834.00px;top:187.64px;font-size:25px;color:#8e8f9b;letter-spacing:1.215px;">ctrl+k</span>
<span class="a t" style="left:2948.50px;top:186.25px;font-size:29px;color:rgb(204,204,220);letter-spacing:0.493px;">Sign in</span>
<span class="a t" style="left:111.20px;top:266.25px;font-size:29px;color:rgb(204,204,220);letter-spacing:1.024px;">Home</span>
<span class="a t" style="left:239.00px;top:266.25px;font-size:29px;color:rgb(204,204,220);letter-spacing:0.633px;">Explore</span>
<span class="a t" style="left:389.00px;top:266.25px;font-size:29px;color:#8e8f9b;letter-spacing:0.685px;">Otel-Grafana-Example</span>
<svg class="a" style="left:0;top:0" width="3072" height="1856" viewBox="0 0 3072 1856"><circle cx="1200.3" cy="200.6" r="11" fill="none" stroke="#8e8f9b" stroke-width="3"/><path d="M1208.2,208.6 L1214.2,214.6" fill="none" stroke="#8e8f9b" stroke-width="3" stroke-linecap="butt" stroke-linejoin="round" /><rect x="1796.3" y="193.3" width="26.4" height="16.4" rx="3.5" fill="none" stroke="#8e8f9b" stroke-width="2.6"/><rect x="1800.2" y="197.9" width="2.4" height="2.4" rx="0" fill="#8e8f9b" stroke="none" stroke-width="0"/><rect x="1805.8" y="197.9" width="2.4" height="2.4" rx="0" fill="#8e8f9b" stroke="none" stroke-width="0"/><rect x="1811.3999999999999" y="197.9" width="2.4" height="2.4" rx="0" fill="#8e8f9b" stroke="none" stroke-width="0"/><rect x="1817.0" y="197.9" width="2.4" height="2.4" rx="0" fill="#8e8f9b" stroke="none" stroke-width="0"/><rect x="1800" y="203.3" width="2.4" height="2.4" rx="0" fill="#8e8f9b" stroke="none" stroke-width="0"/><rect x="1817" y="203.3" width="2.4" height="2.4" rx="0" fill="#8e8f9b" stroke="none" stroke-width="0"/><rect x="1805" y="203.3" width="9.3" height="2.4" rx="0" fill="#8e8f9b" stroke="none" stroke-width="0"/><path d="M2692.5,200.5 H2716.5 M2704.5,188.5 V212.5" fill="none" stroke="#9b9dab" stroke-width="3.3" stroke-linecap="butt" stroke-linejoin="round" /><path d="M2731.3999999999996,198.20000000000002 L2737.7,205.4 L2744.0,198.20000000000002" fill="none" stroke="#9b9dab" stroke-width="2.6" stroke-linecap="butt" stroke-linejoin="miter" /><rect x="2779.5" y="178" width="2.3" height="47" rx="0" fill="#383a42" stroke="none" stroke-width="0"/><circle cx="2826.1" cy="200.5" r="13.4" fill="none" stroke="#9b9dab" stroke-width="3"/><text x="2826.1" y="207.3" font-family="Liberation Sans, sans-serif" font-size="19" font-weight="700" text-anchor="middle" fill="#9b9dab">?</text><circle cx="2893.4" cy="211.6" r="2.9" fill="none" stroke="#9b9dab" stroke-width="2.7"/><path d="M2892,202.5 A10.8,10.8 0 0 1 2902.8,213.3" fill="none" stroke="#9b9dab" stroke-width="3" stroke-linecap="butt" stroke-linejoin="round" /><path d="M2892,196.2 A17,17 0 0 1 2909,213.3" fill="none" stroke="#9b9dab" stroke-width="3" stroke-linecap="butt" stroke-linejoin="round" /><path d="M2892,190 A23.2,23.2 0 0 1 2915.2,213.3" fill="none" stroke="#9b9dab" stroke-width="3" stroke-linecap="butt" stroke-linejoin="round" /><path d="M38,271.4 H74 M38,281.5 H74 M38,291.7 H74" fill="none" stroke="rgb(204,204,220)" stroke-width="4" stroke-linecap="round" stroke-linejoin="round" /><path d="M212.5,275.8 L218.6,281.9 L212.5,288" fill="none" stroke="#8e8f9b" stroke-width="2.8" stroke-linecap="butt" stroke-linejoin="miter" /><path d="M361.5,275.8 L367.6,281.9 L361.5,288" fill="none" stroke="#8e8f9b" stroke-width="2.8" stroke-linecap="butt" stroke-linejoin="miter" /><circle cx="743.7" cy="271.3" r="4.3" fill="none" stroke="#9b9dab" stroke-width="3.2"/><circle cx="725.7" cy="280.3" r="4.3" fill="none" stroke="#9b9dab" stroke-width="3.2"/><circle cx="743.7" cy="289.6" r="4.3" fill="none" stroke="#9b9dab" stroke-width="3.2"/><path d="M729.8,278.3 L739.7,273.4 M729.8,282.4 L739.7,287.5" fill="none" stroke="#9b9dab" stroke-width="3" stroke-linecap="butt" stroke-linejoin="round" /><path d="M782.1999999999999,277.4 L788.8,285.4 L795.4,277.4" fill="none" stroke="#9b9dab" stroke-width="2.6" stroke-linecap="butt" stroke-linejoin="miter" /><rect x="2971.2" y="258" width="2" height="47" rx="0" fill="#2e3037" stroke="none" stroke-width="0"/><path d="M3013,287 L3022.7,277.2 L3032.4,287" fill="none" stroke="#9b9dab" stroke-width="3.4" stroke-linecap="butt" stroke-linejoin="miter" /></svg>
<div class="a" style="left:0px;top:0px;width:3072px;height:80px;background:#111113;"></div>
<div class="a" style="left:6px;top:8px;width:469.5px;height:65px;background:#26262b;border-radius:15px;"></div>
<div class="a" style="left:0px;top:80px;width:3072px;height:80px;background:#26262b;"></div>
<div class="a" style="left:0px;top:159.5px;width:3072px;height:2px;background:#303036;"></div>
<div class="a" style="left:514px;top:88px;width:2042px;height:64px;background:#111113;border-radius:16px;"></div>
<svg class="a" style="left:31px;top:25px;" width="31.4" height="32.65" viewBox="0 0 351 365"><defs><linearGradient id="lg2" gradientUnits="userSpaceOnUse" x1="175.5" y1="445" x2="175.5" y2="114"><stop offset="0" stop-color="#FFF100"/><stop offset="1" stop-color="#F05A28"/></linearGradient></defs><path fill="url(#lg2)" d="M342,161.2c-0.6-6.1-1.6-13.1-3.6-20.9c-2-7.7-5-16.2-9.4-25c-4.4-8.8-10.1-17.9-17.5-26.8c-2.9-3.5-6.1-6.9-9.5-10.2c5.1-20.3-6.2-37.9-6.2-37.9c-19.5-1.2-31.9,6.1-36.5,9.4c-0.8-0.3-1.5-0.7-2.3-1c-3.3-1.3-6.7-2.6-10.3-3.7c-3.5-1.1-7.1-2.1-10.8-3c-3.7-0.9-7.4-1.6-11.2-2.2c-0.7-0.1-1.3-0.2-2-0.3c-8.500-27.200-32.900-38.600-32.900-38.600c-27.300,17.300-32.400,41.500-32.400,41.500s-0.100,0.500-0.300,1.400c-1.500,0.400-3,0.900-4.500,1.300c-2.100,0.600-4.200,1.400-6.200,2.200c-2.100,0.800-4.100,1.600-6.200,2.500c-4.100,1.800-8.200,3.800-12.200,6c-3.900,2.200-7.700,4.600-11.400,7.100c-0.500-0.200-1-0.400-1-0.400c-37.800-14.400-71.300,2.900-71.300,2.900c-3.100,40.200,15.100,65.500,18.700,70.100c-0.900,2.500-1.700,5-2.500,7.500c-2.800,9.100-4.900,18.400-6.200,28.100c-0.200,1.400-0.400,2.800-0.500,4.200C18.800,192.700,8.500,228,8.500,228c29.100,33.500,63.100,35.600,63.100,35.600c0,0,0.100-0.100,0.100-0.100c4.300,7.700,9.300,15,14.900,21.900c2.400,2.900,4.800,5.600,7.400,8.300c-10.600,30.400,1.500,55.600,1.500,55.600c32.400,1.200,53.700-14.200,58.200-17.700c3.200,1.100,6.500,2.100,9.800,2.900c10,2.600,20.200,4.100,30.400,4.500c2.500,0.100,5.100,0.200,7.600,0.100l1.200,0l0.800,0l1.600,0l1.600-0.100l0,0.100c15.300,21.800,42.100,24.900,42.100,24.900c19.100-20.100,20.200-40.100,20.200-44.400l0,0c0,0,0-0.100,0-0.300c0-0.400,0-0.600,0-0.600l0,0c0-0.300,0-0.600,0-0.900c4-2.800,7.800-5.800,11.400-9.100c7.600-6.900,14.300-14.800,19.900-23.300c0.500-0.800,1-1.600,1.500-2.400c21.600,1.200,36.900-13.400,36.900-13.400c-3.600-22.500-16.400-33.500-19.100-35.600l0,0c0,0-0.100-0.100-0.300-0.200c-0.200-0.100-0.200-0.200-0.200-0.200c0,0,0,0,0,0c-0.100-0.100-0.300-0.200-0.500-0.300c0.100-1.400,0.200-2.700,0.300-4.100c0.200-2.400,0.200-4.900,0.200-7.300l0-1.800l0-0.900l0-0.500c0-0.600,0-0.400,0-0.600l-0.100-1.500l-0.100-2c0-0.700-0.100-1.300-0.200-1.900c-0.100-0.600-0.100-1.300-0.200-1.900l-0.200-1.900l-0.300-1.900c-0.400-2.500-0.800-4.900-1.400-7.400c-2.300-9.700-6.100-18.900-11-27.200c-5-8.300-11.200-15.600-18.300-21.800c-7-6.200-14.900-11.200-23.100-14.900c-8.300-3.700-16.900-6.100-25.500-7.200c-4.300-0.600-8.600-0.800-12.900-0.700l-1.600,0l-0.400,0c-0.100,0-0.600,0-0.500,0l-0.700,0l-1.600,0.100c-0.600,0-1.200,0.100-1.700,0.100c-2.200,0.200-4.400,0.500-6.500,0.900c-8.600,1.600-16.700,4.700-23.800,9c-7.100,4.300-13.300,9.600-18.300,15.600c-5,6-8.900,12.700-11.600,19.600c-2.700,6.900-4.200,14.100-4.600,21c-0.100,1.700-0.100,3.500-0.100,5.200c0,0.400,0,0.900,0,1.300l0.100,1.400c0.100,0.800,0.100,1.700,0.200,2.500c0.300,3.500,1,6.900,1.900,10.100c1.900,6.500,4.900,12.400,8.600,17.400c3.700,5,8.200,9.100,12.900,12.400c4.700,3.200,9.800,5.500,14.800,7c5,1.500,10,2.100,14.700,2.100c0.600,0,1.200,0,1.700,0c0.300,0,0.600,0,0.900,0c0.300,0,0.600,0,0.900-0.100c0.500,0,1-0.100,1.500-0.100c0.100,0,0.300,0,0.400-0.100l0.500-0.100c0.300,0,0.600-0.100,0.900-0.100c0.600-0.100,1.100-0.200,1.700-0.300c0.600-0.100,1.100-0.200,1.600-0.400c1.100-0.200,2.100-0.600,3.100-0.900c2-0.700,4-1.500,5.700-2.400c1.800-0.900,3.400-2,5-3c0.400-0.300,0.900-0.600,1.300-1c1.600-1.300,1.900-3.700,0.600-5.300c-1.100-1.400-3.100-1.800-4.700-0.900c-0.400,0.200-0.800,0.400-1.200,0.600c-1.400,0.700-2.800,1.300-4.300,1.800c-1.500,0.500-3.100,0.900-4.700,1.200c-0.800,0.100-1.600,0.200-2.500,0.300c-0.400,0-0.800,0.100-1.300,0.100c-0.400,0-0.900,0-1.200,0c-0.400,0-0.800,0-1.200,0c-0.500,0-1,0-1.500-0.100c0,0-0.300,0-0.100,0l-0.200,0l-0.300,0c-0.200,0-0.500,0-0.700-0.100c-0.500-0.100-0.900-0.100-1.400-0.200c-3.700-0.500-7.400-1.600-10.900-3.200c-3.600-1.600-7-3.800-10.100-6.600c-3.100-2.800-5.800-6.100-7.900-9.900c-2.100-3.800-3.600-8-4.300-12.400c-0.300-2.200-0.500-4.500-0.400-6.700c0-0.600,0.100-1.200,0.100-1.800c0,0.200,0-0.100,0-0.100l0-0.200l0-0.500c0-0.300,0.100-0.600,0.100-0.900c0.100-1.200,0.300-2.400,0.500-3.600c1.700-9.600,6.500-19,13.900-26.100c1.900-1.800,3.900-3.400,6-4.900c2.100-1.500,4.400-2.800,6.800-3.900c2.400-1.100,4.800-2,7.400-2.700c2.500-0.700,5.100-1.100,7.800-1.400c1.300-0.100,2.600-0.200,4-0.200c0.400,0,0.600,0,0.900,0l1.100,0l0.700,0c0.300,0,0,0,0.100,0l0.300,0l1.100,0.100c2.900,0.200,5.700,0.600,8.500,1.300c5.600,1.200,11.100,3.300,16.200,6.100c10.200,5.700,18.900,14.500,24.200,25.100c2.700,5.300,4.600,11,5.500,16.900c0.200,1.500,0.400,3,0.500,4.500l0.100,1.100l0.100,1.100c0,0.400,0,0.800,0,1.100c0,0.400,0,0.800,0,1.100l0,1l0,1.100c0,0.700-0.100,1.900-0.100,2.600c-0.100,1.600-0.300,3.300-0.500,4.900c-0.200,1.600-0.500,3.200-0.800,4.800c-0.300,1.600-0.700,3.200-1.100,4.700c-0.800,3.100-1.800,6.200-3,9.300c-2.400,6-5.600,11.800-9.400,17.100c-7.700,10.600-18.200,19.200-30.200,24.700c-6,2.700-12.300,4.700-18.800,5.700c-3.200,0.600-6.500,0.900-9.800,1l-0.600,0l-0.500,0l-1.100,0l-1.600,0l-0.800,0c0.400,0-0.100,0-0.100,0l-0.300,0c-1.800,0-3.500-0.100-5.300-0.300c-7-0.500-13.900-1.800-20.700-3.700c-6.700-1.900-13.200-4.600-19.400-7.800c-12.300-6.600-23.400-15.600-32-26.500c-4.300-5.400-8.100-11.300-11.200-17.400c-3.100-6.100-5.600-12.600-7.400-19.100c-1.800-6.600-2.900-13.300-3.400-20.100l-0.100-1.300l0-0.300l0-0.300l0-0.600l0-1.100l0-0.300l0-0.400l0-0.800l0-1.600l0-0.300c0,0,0,0.100,0-0.100l0-0.600c0-0.800,0-1.700,0-2.500c0.100-3.300,0.400-6.800,0.800-10.200c0.400-3.400,1-6.900,1.700-10.300c0.700-3.400,1.500-6.800,2.500-10.200c1.900-6.700,4.300-13.200,7.100-19.300c5.700-12.200,13.100-23.100,22-31.800c2.200-2.200,4.500-4.200,6.900-6.200c2.400-1.900,4.900-3.700,7.500-5.400c2.500-1.700,5.200-3.200,7.900-4.600c1.300-0.700,2.700-1.400,4.100-2c0.700-0.300,1.400-0.600,2.100-0.900c0.700-0.300,1.400-0.600,2.100-0.900c2.800-1.200,5.700-2.200,8.700-3.100c0.700-0.200,1.500-0.400,2.200-0.700c0.700-0.200,1.500-0.400,2.200-0.600c1.500-0.400,3-0.800,4.500-1.100c0.700-0.200,1.500-0.300,2.300-0.500c0.800-0.200,1.500-0.300,2.300-0.500c0.800-0.100,1.500-0.300,2.300-0.400l1.100-0.200l1.200-0.200c0.800-0.100,1.500-0.200,2.300-0.300c0.900-0.100,1.700-0.200,2.600-0.300c0.700-0.100,1.900-0.200,2.600-0.300c0.500-0.100,1.100-0.100,1.600-0.200l1.100-0.100l0.500-0.100l0.600,0c0.900-0.100,1.700-0.100,2.600-0.200l1.300-0.100c0,0,0.500,0,0.100,0l0.300,0l0.600,0c0.700,0,1.500-0.100,2.200-0.100c2.900-0.100,5.900-0.100,8.800,0c5.800,0.200,11.500,0.900,17,1.900c11.100,2.100,21.500,5.600,31,10.300c9.500,4.600,17.900,10.300,25.300,16.500c0.500,0.400,0.900,0.800,1.400,1.200c0.400,0.400,0.900,0.800,1.300,1.200c0.900,0.800,1.700,1.600,2.600,2.400c0.900,0.800,1.700,1.600,2.500,2.400c0.800,0.800,1.600,1.600,2.400,2.500c3.100,3.300,6,6.600,8.600,10c5.200,6.700,9.400,13.500,12.700,19.900c0.200,0.400,0.400,0.800,0.600,1.200c0.200,0.400,0.400,0.800,0.600,1.200c0.400,0.800,0.800,1.600,1.100,2.400c0.400,0.800,0.700,1.500,1.100,2.300c0.300,0.800,0.700,1.500,1,2.300c1.200,3,2.400,5.900,3.300,8.600c1.500,4.400,2.600,8.300,3.500,11.700c0.300,1.400,1.600,2.300,3,2.100c1.500-0.100,2.600-1.300,2.600-2.800C342.600,170.400,342.500,166.100,342,161.200z"/></svg>
<span class="a t" style="left:77.50px;top:27.95px;font-size:29px;color:#ececf0;letter-spacing:0.570px;-webkit-mask-image:linear-gradient(90deg,#000 84%,transparent 99%);">Explore - Otel-Grafana-E</span>
<span class="a t" style="left:590.40px;top:107.10px;font-size:28px;color:#e2e2e8;letter-spacing:0.353px;">localhost:3000</span>
<span class="a t" style="left:778.20px;top:107.10px;font-size:28px;color:#c2c2ca;letter-spacing:-0.477px;">/explore?</span>
<span class="a t" style="left:892.60px;top:107.10px;font-size:28px;color:#c2c2ca;letter-spacing:-0.330px;">schemaVersion=1&amp;</span>
<span class="a t" style="left:1131.20px;top:107.10px;font-size:28px;color:#c2c2ca;letter-spacing:-0.778px;">panes=</span>
<span class="a t" style="left:1220.00px;top:107.10px;font-size:28px;color:#c2c2ca;letter-spacing:0.407px;">%7B"q2h":</span>
<span class="a t" style="left:1358.80px;top:107.10px;font-size:28px;color:#c2c2ca;letter-spacing:0.263px;">%7B"datasource":</span>
<span class="a t" style="left:1590.00px;top:107.10px;font-size:28px;color:#c2c2ca;letter-spacing:-0.476px;">"PB6C3726EF4D27620",</span>
<span class="a t" style="left:1893.00px;top:107.10px;font-size:28px;color:#c2c2ca;letter-spacing:0.432px;">"queries":</span>
<span class="a t" style="left:2016.50px;top:107.10px;font-size:28px;color:#c2c2ca;letter-spacing:-0.023px;">%5B%7B</span>
<span class="a t" style="left:2136.60px;top:107.10px;font-size:28px;color:#c2c2ca;letter-spacing:0.613px;">"refId":</span>
<span class="a t" style="left:2225.00px;top:107.10px;font-size:28px;color:#c2c2ca;letter-spacing:0.845px;">"A","…</span>
<svg class="a" style="left:0;top:0" width="3072" height="1856" viewBox="0 0 3072 1856"><path d="M436.6,34.6 L451.4,49.4 M451.4,34.6 L436.6,49.4" fill="none" stroke="#ececf0" stroke-width="3.2" stroke-linecap="butt" stroke-linejoin="round" /><path d="M506.7,40 H528.3 M517.5,29.2 V50.8" fill="none" stroke="#ececf0" stroke-width="2.8" stroke-linecap="butt" stroke-linejoin="round" /><path d="M2956.5,35.3 L2966,44.8 L2975.5,35.3" fill="none" stroke="#ececf0" stroke-width="3" stroke-linecap="butt" stroke-linejoin="miter" /><path d="M3026.5,31.200000000000003 L3046.5,51.2 M3046.5,31.200000000000003 L3026.5,51.2" fill="none" stroke="#ececf0" stroke-width="2.8" stroke-linecap="butt" stroke-linejoin="round" /><path d="M50.3,107 L38.3,120 L50.3,133" fill="none" stroke="#ececf0" stroke-width="2.8" stroke-linecap="butt" stroke-linejoin="miter" /><path d="M97.6,107 L109.6,120 L97.6,133" fill="none" stroke="#6e6e78" stroke-width="2.8" stroke-linecap="butt" stroke-linejoin="miter" /><path d="M173.7,117 A12,12 0 1 0 172.3,125.7" fill="none" stroke="#ececf0" stroke-width="2.8" stroke-linecap="butt" stroke-linejoin="round" /><circle cx="174.7" cy="116.6" r="3.9" fill="#ececf0" stroke="none" stroke-width="0"/><path d="M458,134 V109.5 A2.6,2.6 0 0 1 460.6,106.9 H474.8 A2.6,2.6 0 0 1 477.4,109.5 V134 L467.7,128.3 Z" fill="none" stroke="#ececf0" stroke-width="2.8" stroke-linecap="butt" stroke-linejoin="round" /><circle cx="545.5" cy="121" r="13.3" fill="#e3e3ea" stroke="none" stroke-width="0"/><circle cx="545.5" cy="114.6" r="1.9" fill="#26262b" stroke="none" stroke-width="0"/><rect x="543.9" y="118.4" width="3.2" height="9.8" rx="0" fill="#26262b" stroke="none" stroke-width="0"/><circle cx="2366.6" cy="110.8" r="3.6" fill="none" stroke="#d4d4da" stroke-width="2.4"/><circle cx="2348.3" cy="119.5" r="3.6" fill="none" stroke="#d4d4da" stroke-width="2.4"/><circle cx="2366.6" cy="128.4" r="3.6" fill="none" stroke="#d4d4da" stroke-width="2.4"/><path d="M2351.6,117.9 L2363.3,112.4 M2351.6,121.1 L2363.3,126.8" fill="none" stroke="#d4d4da" stroke-width="2.4" stroke-linecap="butt" stroke-linejoin="round" /><rect x="2389.7" y="104" width="2.5" height="32" rx="0" fill="#b9b9c0" stroke="none" stroke-width="0"/><path d="M2424.5,102.3 H2436.5 L2439.8,106 L2443.5,105.3 L2446.4,109.8 L2445.2,112.8 L2446.4,116.5 C2445.5,121 2444.2,125.5 2442.5,129.3 C2441.5,131.5 2440,133.2 2438,134.6 L2430.5,139 L2423,134.6 C2421,133.2 2419.5,131.5 2418.5,129.3 C2416.8,125.5 2415.5,121 2414.6,116.5 L2415.8,112.8 L2414.6,109.8 L2417.5,105.3 L2421.2,106 Z" fill="#fb542b" stroke="#fb542b" stroke-width="0" stroke-linecap="round" stroke-linejoin="round" /><path d="M2430.5,108.5 L2435.5,108 L2439.5,109.5 L2442.6,113.5 L2441.5,118 L2439,122.5 L2439.6,125.5 L2436.5,128.5 L2433.5,130.5 L2430.5,133 L2427.5,130.5 L2424.5,128.5 L2421.4,125.5 L2422,122.5 L2419.5,118 L2418.4,113.5 L2421.5,109.5 L2425.5,108 Z" fill="#fff" stroke="#fff" stroke-width="0" stroke-linecap="round" stroke-linejoin="round" /><path d="M2423.5,114.5 L2427.5,115.3 L2426.5,117 Z M2437.5,114.5 L2433.5,115.3 L2434.5,117 Z M2430.5,117 L2432,122 L2430.5,123.5 L2429,122 Z M2427,126.2 L2430.5,125.2 L2434,126.2 L2430.5,128.2 Z" fill="#fb542b" stroke="#fb542b" stroke-width="0" stroke-linecap="round" stroke-linejoin="round" /><path d="M2498,104.5 L2479.7,136 L2498,125.5 Z" fill="#ff4724" stroke="" stroke-width="0" stroke-linecap="round" stroke-linejoin="round" /><path d="M2498,104.5 L2515.9,136 L2498,125.5 Z" fill="#9e1f63" stroke="" stroke-width="0" stroke-linecap="round" stroke-linejoin="round" /><path d="M2479.7,136 L2515.9,136 L2498,125.5 Z" fill="#662d91" stroke="" stroke-width="0" stroke-linecap="round" stroke-linejoin="round" /><path d="M2498,117.4 L2491,129.7 L2505,129.7 Z" fill="#fff" stroke="" stroke-width="0" stroke-linecap="round" stroke-linejoin="round" /><path d="M2776.5,113.5 H2782.6 C2781.2,109.4 2783.2,107.3 2786,107.3 C2788.8,107.3 2790.8,109.4 2789.4,113.5 H2795.6 V119.6 C2799.7,118.2 2801.3,120.4 2801.3,123 C2801.3,125.6 2799.7,127.8 2795.6,126.4 V134.6 H2789.6 C2790.6,131.4 2788.8,129.6 2786,129.6 C2783.2,129.6 2781.4,131.4 2782.4,134.6 H2776.5 V127.4 C2780,128.4 2781.6,126.2 2781.6,123.6 C2781.6,121 2780,119 2776.5,120 Z" fill="none" stroke="#ececf0" stroke-width="2.6" stroke-linecap="round" stroke-linejoin="round" /><rect x="2834.3" y="107.7" width="27.4" height="25.3" rx="3" fill="none" stroke="#ececf0" stroke-width="2.6"/><path d="M2854.6,107.7 H2859 A2.7,2.7 0 0 1 2861.7,110.4 V130.3 A2.7,2.7 0 0 1 2859,133 H2854.6 Z" fill="#ececf0" stroke="#ececf0" stroke-width="0" stroke-linecap="round" stroke-linejoin="round" /><rect x="2894" y="111.6" width="27.2" height="20.7" rx="3" fill="none" stroke="#ececf0" stroke-width="2.6"/><path d="M2894,113.5 V111 A2.6,2.6 0 0 1 2896.6,108.4 H2913.5 A3.2,3.2 0 0 1 2916.7,111.4" fill="none" stroke="#ececf0" stroke-width="2.6" stroke-linecap="butt" stroke-linejoin="round" /><rect x="2909.4" y="118.6" width="11.8" height="8.2" rx="2.6" fill="none" stroke="#ececf0" stroke-width="2.6"/><path d="M2967.3,107.2 C2969,113.2 2973.6,117.8 2979.6,119.5 C2973.6,121.2 2969,125.8 2967.3,131.8 C2965.6,125.8 2961,121.2 2955,119.5 C2961,117.8 2965.6,113.2 2967.3,107.2 Z" fill="none" stroke="#ececf0" stroke-width="2.6" stroke-linecap="round" stroke-linejoin="round" /><path d="M2978.4,124.9 C2979,128.4 2980.4,129.8 2984,130.5 C2980.4,131.2 2979,132.6 2978.4,136.2 C2977.8,132.6 2976.4,131.2 2972.8,130.5 C2976.4,129.8 2977.8,128.4 2978.4,124.9 Z" fill="#ececf0" stroke="#ececf0" stroke-width="0" stroke-linecap="round" stroke-linejoin="round" /><path d="M3013.3,110.7 H3042.8 M3013.3,120.8 H3042.8 M3013.3,130.9 H3042.8" fill="none" stroke="#ececf0" stroke-width="2.6" stroke-linecap="round" stroke-linejoin="round" /></svg>
</div>
</body></html>
